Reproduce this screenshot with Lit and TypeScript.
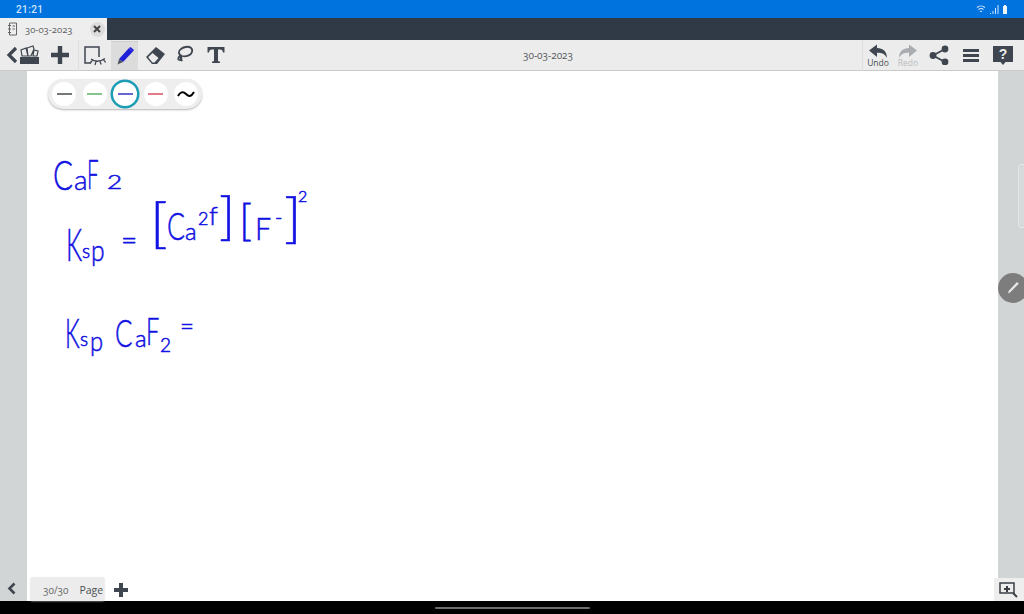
import { LitElement, html, css, svg } from "lit";
import { customElement } from "lit/decorators.js";

const INK: [string, number, number, number, number][] = [
  ["C", 53, 191, 41, 0.72], ["a", 74, 190, 28, 1], ["F", 87, 190, 41, 0.5], ["2", 107, 189, 20, 1.3],
  ["K", 66, 262, 46, 0.55], ["s", 82, 258, 19, 1], ["p", 91, 261, 29, 0.85], ["=", 121, 250, 28, 1],
  ["[", 150, 243, 54, 1.1], ["C", 167, 240, 38, 0.7], ["a", 185, 240, 24, 1], ["2", 198, 225, 18, 1], ["f", 209, 225, 26, 1],
  ["]", 219, 234, 52, 1.05], ["[", 239, 236, 44, 1], ["F", 255, 240, 32, 0.9], ["-", 275, 224, 20, 1], ["]", 284, 238, 54, 1.1], ["2", 298, 202, 16, 1],
  ["K", 65, 348, 42, 0.55], ["s", 80, 346, 19, 1], ["p", 90, 351, 28, 0.85], ["C", 115, 347, 38, 0.68], ["a", 135, 347, 24, 1], ["F", 146, 345, 38, 0.62], ["2", 160, 352, 19, 1], ["=", 180, 335, 24, 1],
];

const PENS = [
  { c: "#757878", sel: false }, { c: "#85c58c", sel: false }, { c: "#6565d4", sel: true }, { c: "#e27a88", sel: false },
];

const I = "#3f4650";

@customElement("app-root")
export class AppRoot extends LitElement {
  static styles = css`
    :host { display: flex; flex-direction: column; width: 1024px; height: 614px; overflow: hidden; font-family: "Open Sans", "Liberation Sans", sans-serif; background: #000; }
    .status { height: 18px; background: #0073de; display: flex; align-items: center; justify-content: space-between; padding: 0 14px 0 16px; color: #cfe6ff; font: 500 10px "Roboto", sans-serif; letter-spacing: .4px; flex: none; }
    .status svg { display: block; }
    .tabs { height: 22px; background: #303a47; flex: none; display: flex; }
    .tab { width: 107px; background: #eeeeee; display: flex; align-items: center; padding-left: 7px; box-sizing: border-box; gap: 7px; color: #5c5f63; font-size: 9.5px; font-variant-numeric: oldstyle-nums; white-space: nowrap; }
    .tab .x { width: 15px; height: 15px; border-radius: 50%; background: #dcdcdc; display: flex; align-items: center; justify-content: center; margin-left: 10px; flex: none; }
    .toolbar { height: 31px; background: #ececec; border-bottom: 1px solid #c9c9c9; flex: none; display: flex; align-items: center; position: relative; box-sizing: border-box; padding-left: 6px; z-index: 2; }
    .btn { display: flex; align-items: center; justify-content: center; height: 28px; flex: none; }
    .sel { background: #dcdcdc; border-top: 1px solid #cfcfcf; }
    .divider { width: 1px; height: 31px; background: #dedede; flex: none; }
    .date { flex: 1; text-align: center; font-size: 10px; color: #55585c; font-variant-numeric: oldstyle-nums; }
    .group { display: flex; align-items: center; padding-right: 5px; }
    .lab { display: flex; flex-direction: column; align-items: center; width: 30px; font-size: 8.5px; font-weight: 500; color: #4a4f55; line-height: 8px; margin-top: 1px; }
    .lab.off { color: #b9bcbf; }
    .main { flex: 1; display: flex; position: relative; min-height: 0; }
    .gutter { background: #d1d5d5; flex: none; }
    .gutter.l { width: 27px; }
    .gutter.r { width: 26px; }
    .page { flex: 1; background: #fff; position: relative; }
    .palette { position: absolute; left: 21px; top: 8px; width: 154px; height: 30px; border-radius: 15px; background: #eeeeee; box-shadow: 0 1px 2px #b5b5b5; display: flex; align-items: center; padding-left: 4px; box-sizing: border-box; gap: 6.5px; }
    .pen { width: 24px; height: 24px; border-radius: 50%; background: #fff; display: flex; align-items: center; justify-content: center; flex: none; box-sizing: border-box; }
    .pen.on { box-shadow: 0 0 0 2.5px #1c9db3; }
    .pen i { display: block; width: 15px; height: 1.2px; }
    .ink { position: absolute; line-height: 0; color: #1212e2; font-family: "Lato", "Liberation Sans", sans-serif; font-weight: 300; white-space: pre; transform-origin: left center; -webkit-text-stroke: 0.55px #1212e2; }
    .pager { position: absolute; left: 4px; bottom: 0; display: flex; align-items: center; height: 23px; }
    .pg { width: 73px; height: 23px; background: #ececec; display: flex; align-items: center; box-sizing: border-box; padding-left: 12px; gap: 11px; color: #666; font-size: 10px; font-variant-numeric: oldstyle-nums; box-shadow: 0 0 2px #ccc; }
    .pg b { font-weight: 500; color: #4a4f55; font-size: 10.5px; }
    .add { margin-left: 10px; display: flex; }
    .back { position: absolute; left: 7px; bottom: 6px; display: flex; }
    .side { position: absolute; right: -6px; top: 93px; width: 10px; height: 62px; border: 1px solid #e4e6e6; border-radius: 3px; background: #d6dada; }
    .fab { position: absolute; right: -4px; top: 202px; width: 30px; height: 30px; border-radius: 50%; background: #7d7d7d; display: flex; align-items: center; justify-content: center; }
    .zoom { position: absolute; right: 0; bottom: 0; width: 30px; height: 23px; background: #eeeeee; display: flex; align-items: center; justify-content: center; }
    .home { height: 13px; background: #000; flex: none; display: flex; align-items: center; justify-content: center; }
    .home i { display: block; width: 155px; height: 2px; border-radius: 1px; background: #6d6d6d; margin-left: 1px; }
    .w12 { width: 12px; } .w24 { width: 24px; } .w36 { width: 36px; } .w31 { width: 31px; margin-right: 1px; }
    .w27 { width: 27px; } .w34 { width: 34px; } .w26 { width: 26px; } .w32 { width: 32px; }
  `;

  private ico(w: number, h: number, body: unknown) {
    return html`<svg width=${w} height=${h} viewBox="0 0 ${w} ${h}">${body}</svg>`;
  }

  render() {
    return html`
      <div class="status"><span>21:21</span>
        ${this.ico(34, 11, svg`
          <path d="M1 3.500a6 6 0 0 1 8 0M2.500 5.500a4 4 0 0 1 5 0M4 7.500a2 2 0 0 1 2 0" fill="none" stroke="#cfe6ff" stroke-width="1.100"/>
          <path d="M14 9h1v1h-1zM16.500 7h1v3h-1zM19 4h1v6h-1zM21.500 1h1v9h-1z" fill="#cfe6ff"/>
          <path d="M27 2h1V1h2v1h1v8h-4z" fill="#eef6ff"/>`)}
      </div>
      <div class="tabs"><div class="tab">
        ${this.ico(11, 14, svg`<path d="M2.500 1h7v12h-7zM1 3.500h3M1 7h3M1 10.500h3M5.500 4h2.500M5.500 7h2.500" fill="none" stroke="#666" stroke-width="1"/>`)}
        <span>30-03-2023</span>
        <span class="x">${this.ico(8, 8, svg`<path d="M1 1l6 6M7 1l-6 6" stroke="#444" stroke-width="2"/>`)}</span>
      </div></div>
      <div class="toolbar">
        <div class="btn w12">${this.ico(12, 18, svg`<path d="M10 2L3 9l7 7" fill="none" stroke="${I}" stroke-width="3.200"/>`)}</div>
        <div class="btn w24">${this.ico(22, 20, svg`
          <path d="M1 12h19v7H1z" fill="${I}"/>
          <path d="M3 11l-1-6 5-2 2 8zM8 3l6-2 1 3-3 7H9zM15 5l4 1-1 5h-4z" fill="#ececec" stroke="${I}" stroke-width="1.200"/>`)}</div>
        <div class="btn w36">${this.ico(18, 18, svg`<path d="M6.800 0h4.400v6.800H18v4.400h-6.800V18H6.800v-6.800H0V6.800h6.800z" fill="${I}"/>`)}</div>
        <div class="divider"></div>
        <div class="btn w31">${this.ico(23, 23, svg`
          <path d="M8 19H2V3h14v10" fill="none" stroke="${I}" stroke-width="1.500"/>
          <path d="M8 15c4 3 9 3 14-.5M9.500 16l-2.200 3M13 17.500l-1 3.500M17 17.500l1.200 3M20.500 15.500l2 3" fill="none" stroke="${I}" stroke-width="1.300"/>`)}</div>
        <div class="btn sel w27">${this.ico(20, 20, svg`
          <path d="M4 13L14 2l4 3.500L8 16z" fill="#1f1fd8"/><path d="M4 13l4 3-5.500 2.500z" fill="#50565e"/><path d="M14 2l4 3.500 1-1.500-3.500-3z" fill="#1f1fd8"/>`)}</div>
        <div class="btn w34">${this.ico(21, 19, svg`
          <path d="M1 11L11 1l9 7-8 10h-5z" fill="${I}"/><path d="M3.200 11.200L7.500 7l6 5-4 4.500H7.500z" fill="#ececec"/>`)}</div>
        <div class="btn w26">${this.ico(18, 20, svg`
          <path d="M9.500 2C14 1 17 3.500 16 7c-1 3.500-6 5-10 4-4-1.500-4-5-1-7 1.200-1 3-1.700 4.500-2zM4.500 10.500c-2.500 1.500-3 4-1.200 4.500 2 .5 3-1.500 1.500-3-1-1 0 3 1.500 4" fill="none" stroke="${I}" stroke-width="1.800"/>`)}</div>
        <div class="btn w36">${this.ico(18, 18, svg`
          <path d="M.5 1h17v5.500H16c-.3-2-1-3-3-3h-2v11c0 .8.500 1 2 1V17H5v-1.500c1.500 0 2-.2 2-1v-11H5c-2 0-2.700 1-3 3H.5z" fill="${I}"/>`)}</div>
        <div class="date">30-03-2023</div>
        <div class="divider"></div>
        <div class="group">
          <div class="lab">${this.ico(20, 15, svg`<path d="M1 6.500L9 .5V4c6 0 10 3.500 10 10-2-4-5-5.200-10-5.200V13z" fill="${I}"/>`)}Undo</div>
          <div class="lab off">${this.ico(20, 15, svg`<path d="M19 6.500L11 .5V4C5 4 1 7.500 1 14c2-4 5-5.200 10-5.200V13z" fill="#a9adb1"/>`)}Redo</div>
          <div class="btn w32">${this.ico(20, 20, svg`
            <circle cx="16" cy="4" r="3.400" fill="${I}"/><circle cx="4" cy="10.500" r="3.400" fill="${I}"/><circle cx="16" cy="17" r="3.400" fill="${I}"/>
            <path d="M16 4L4 10.500 16 17" fill="none" stroke="${I}" stroke-width="1.800"/>`)}</div>
          <div class="btn w32">${this.ico(16, 15, svg`<path d="M0 1h16v3H0zM0 6h16v3H0zM0 11h16v3H0z" fill="${I}"/>`)}</div>
          <div class="btn w32">
            <svg width="20" height="21" viewBox="0 0 20 21"><path d="M0 1h20v16h-7.500L10 20l-2.500-3H0z" fill="${I}"/><text x="10" y="14" text-anchor="middle" font-family="Liberation Sans" font-weight="700" font-size="14" fill="#ececec">?</text></svg>
          </div>
        </div>
      </div>
      <div class="main">
        <div class="gutter l"></div>
        <div class="page">
          ${INK.map(([t, x, y, s, sx]) => html`<span class="ink" style="left:${x - 27}px;top:${y - 71 - s * 0.387}px;font-size:${s}px;transform:scaleX(${sx})">${t}</span>`)}
          <div class="palette">
            ${PENS.map((p) => html`<div class="pen ${p.sel ? "on" : ""}"><i style="background:${p.c}"></i></div>`)}
            <div class="pen">${this.ico(18, 10, svg`<path d="M1 7c2-4 5-5 8-2s5 3 8-2" fill="none" stroke="#000" stroke-width="2"/>`)}</div>
          </div>
          <div class="pager">
            <div class="pg"><span>30/30</span><b>Page</b></div>
            <div class="add">${this.ico(14, 14, svg`<path d="M5 0h4v5h5v4H9v5H5V9H0V5h5z" fill="${I}"/>`)}</div>
          </div>
        </div>
        <div class="gutter r"></div>
        <div class="back">${this.ico(9, 13, svg`<path d="M7.500 1.500L2.500 6.500l5 5" fill="none" stroke="${I}" stroke-width="2.600"/>`)}</div>
        <div class="side"></div>
        <div class="fab">${this.ico(18, 18, svg`<path d="M4 14.500l.8-2.800L13 3l1.800 1.800L6 13.500z" fill="#e8e8e8"/>`)}</div>
        <div class="zoom">${this.ico(20, 16, svg`
          <path d="M1 1h14v10H1z" fill="none" stroke="#3a3f45" stroke-width="1.500"/>
          <path d="M7 4h2v2h2v2H9v2H7V8H5V6h2z" fill="#3a3f45"/>
          <path d="M14 11l4 4" stroke="#3a3f45" stroke-width="2"/>`)}</div>
      </div>
      <div class="home"><i></i></div>
    `;
  }
}
